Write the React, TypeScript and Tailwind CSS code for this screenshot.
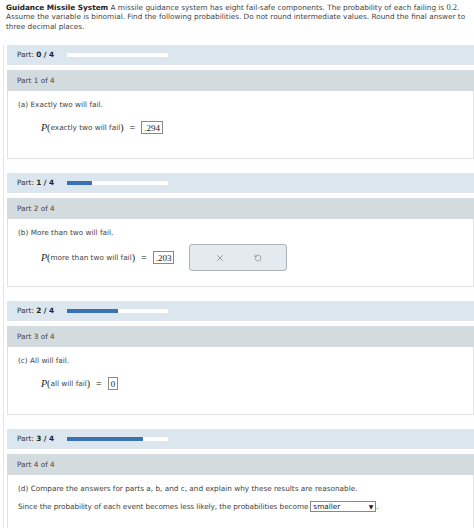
import { RotateCcw, X } from "lucide-react";

type PartData = {
  done: number;
  label: string;
  question: string;
};

const parts: PartData[] = [
  { done: 0, label: "Part 1 of 4", question: "(a) Exactly two will fail." },
  { done: 1, label: "Part 2 of 4", question: "(b) More than two will fail." },
  { done: 2, label: "Part 3 of 4", question: "(c) All will fail." },
  { done: 3, label: "Part 4 of 4", question: "(d) Compare the answers for parts a, b, and c, and explain why these results are reasonable." },
];

function ProgressBand({ done }: { done: number }) {
  return (
    <div className="flex h-[20px] items-center bg-[#dce6ef] pl-[10px] text-[#333]">
      <span className="w-[50px]">
        Part: <b className="text-[#222]">{done} / 4</b>
      </span>
      <div className="h-[4px] w-[101px] bg-white">
        <div className="h-full bg-[#3b72b0]" style={{ width: `${(done / 4) * 100}%` }} />
      </div>
    </div>
  );
}

function MathLine({ inner, value }: { inner: string; value: string }) {
  return (
    <div className="flex items-center pl-[23px]">
      <span className="font-['Liberation_Serif'] text-[10px] italic text-[#222]">P</span>
      <span className="font-['Liberation_Serif'] text-[10px] text-[#222]">(</span>
      <span>{inner}</span>
      <span className="font-['Liberation_Serif'] text-[10px] text-[#222]">)</span>
      <span className="mx-[6px] font-['Liberation_Serif'] text-[10px] text-[#222]">=</span>
      <span className="flex h-[13px] items-center border border-[#8a8a8a] px-[2px] font-['Liberation_Serif'] text-[9px] text-[#222]">
        {value}
      </span>
    </div>
  );
}

export default function App() {
  return (
    <div className="h-[528px] w-[474px] overflow-hidden bg-white font-['DejaVu_Sans',sans-serif] text-[7.3px] leading-[10px] text-[#444]">
      <div className="px-[6px] pt-[2px]">
        <div className="flex h-[10px] items-baseline whitespace-pre">
          <b className="text-[#222]">Guidance Missile System</b>
          <span> A missile guidance system has eight fail-safe components. The probability of each failing is </span>
          <span className="font-['Liberation_Serif'] text-[8.5px]">0.2</span>
          <span>.</span>
        </div>
        <div className="h-[10px] whitespace-nowrap">
          Assume the variable is binomial. Find the following probabilities. Do not round intermediate values. Round
          the final answer to
        </div>
        <div className="h-[10px]">three decimal places.</div>
      </div>

      <div className="ml-[3px] mt-[13px] border-l border-[#e6e6e6] pl-[3px]">
        {parts.map((p, i) => (
          <div key={i} className="mb-[14px]">
            <ProgressBand done={p.done} />
            <div className="mt-[5px] flex h-[21px] items-center bg-[#d3dbde] pl-[10px] text-[#444]">{p.label}</div>
            <div className="h-[68px] border border-t-0 border-[#e2e2e2] pl-[10px] pt-[9px]">
              <div>{p.question}</div>
              {i === 0 && (
                <div className="mt-[11px]">
                  <MathLine inner="exactly two will fail" value=".294" />
                </div>
              )}
              {i === 1 && (
                <div className="mt-[6px] flex items-center">
                  <MathLine inner="more than two will fail" value=".203" />
                  <div className="ml-[15px] flex h-[27px] w-[98px] items-center justify-around rounded-[3px] border border-[#aab4bc] bg-[#e5eaee] px-[10px] text-[#666]">
                    <X size={10} strokeWidth={1.4} />
                    <RotateCcw size={8} strokeWidth={1.5} />
                  </div>
                </div>
              )}
              {i === 2 && (
                <div className="mt-[11px]">
                  <MathLine inner="all will fail" value="0" />
                </div>
              )}
              {i === 3 && (
                <div className="mt-[7px] flex items-center">
                  <span className="tracking-[-0.07px]">
                    Since the probability of each event becomes less likely, the probabilities become
                  </span>
                  <span className="ml-[2px] flex h-[11px] w-[66px] items-center justify-between border border-[#888] px-[2px] text-[#222]">
                    smaller
                    <span className="text-[6px]">▼</span>
                  </span>
                  <span>.</span>
                </div>
              )}
            </div>
          </div>
        ))}
      </div>
    </div>
  );
}
